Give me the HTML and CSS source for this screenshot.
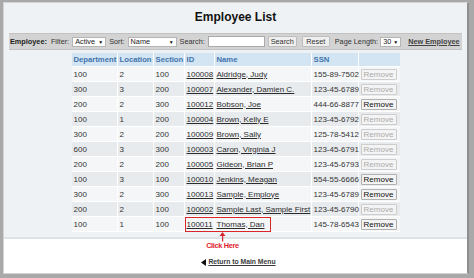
FILE: index.html
```html
<!DOCTYPE html>
<html>
<head>
<meta charset="utf-8">
<link rel="stylesheet" href="styles.css">
</head>
<body>
<div class="window">
  <div class="panel">
    <h1 class="title">Employee List</h1>
    <div class="toolbar">
      <b class="tb-label">Employee:</b>
      <span class="tb-text">Filter:</span>
      <div class="select w-active"><span>Active</span><span class="caret">▼</span></div>
      <span class="tb-text">Sort:</span>
      <div class="select w-name"><span>Name</span><span class="caret">▼</span></div>
      <span class="tb-text">Search:</span>
      <input class="search-input" type="text">
      <button class="tb-btn w-search">Search</button>
      <button class="tb-btn w-reset">Reset</button>
      <span class="tb-text pl">Page Length:</span>
      <div class="select w-len"><span>30</span><span class="caret">▼</span></div>
      <a class="new-link" href="#">New Employee</a>
    </div>
    <div class="table-wrap">
      <table class="grid">
        <colgroup>
          <col class="c-dept"><col class="c-loc"><col class="c-sec"><col class="c-id"><col class="c-name"><col class="c-ssn"><col class="c-rm">
        </colgroup>
        <thead>
          <tr><th>Department</th><th>Location</th><th>Section</th><th>ID</th><th>Name</th><th>SSN</th><th class="last"></th></tr>
        </thead>
        <tbody>
          <tr><td>100</td><td>2</td><td>100</td><td><a href="#">100008</a></td><td><a href="#">Aldridge, Judy</a></td><td>155-89-7502</td><td class="last"><button class="rm" disabled>Remove</button></td></tr>
          <tr><td>300</td><td>3</td><td>200</td><td><a href="#">100007</a></td><td><a href="#">Alexander, Damien C.</a></td><td>123-45-6789</td><td class="last"><button class="rm" disabled>Remove</button></td></tr>
          <tr><td>200</td><td>2</td><td>300</td><td><a href="#">100012</a></td><td><a href="#">Bobson, Joe</a></td><td>444-66-8877</td><td class="last"><button class="rm">Remove</button></td></tr>
          <tr><td>100</td><td>1</td><td>200</td><td><a href="#">100004</a></td><td><a href="#">Brown, Kelly E</a></td><td>123-45-6792</td><td class="last"><button class="rm" disabled>Remove</button></td></tr>
          <tr><td>300</td><td>2</td><td>200</td><td><a href="#">100009</a></td><td><a href="#">Brown, Sally</a></td><td>125-78-5412</td><td class="last"><button class="rm" disabled>Remove</button></td></tr>
          <tr><td>600</td><td>3</td><td>300</td><td><a href="#">100003</a></td><td><a href="#">Caron, Virginia J</a></td><td>123-45-6791</td><td class="last"><button class="rm" disabled>Remove</button></td></tr>
          <tr><td>200</td><td>2</td><td>200</td><td><a href="#">100005</a></td><td><a href="#">Gideon, Brian P</a></td><td>123-45-6793</td><td class="last"><button class="rm" disabled>Remove</button></td></tr>
          <tr><td>100</td><td>3</td><td>100</td><td><a href="#">100010</a></td><td><a href="#">Jenkins, Meagan</a></td><td>554-55-6666</td><td class="last"><button class="rm">Remove</button></td></tr>
          <tr><td>300</td><td>2</td><td>300</td><td><a href="#">100013</a></td><td><a href="#">Sample, Employe</a></td><td>123-45-6789</td><td class="last"><button class="rm">Remove</button></td></tr>
          <tr><td>200</td><td>2</td><td>100</td><td><a href="#">100002</a></td><td><a href="#">Sample Last, Sample First</a></td><td>123-45-6790</td><td class="last"><button class="rm" disabled>Remove</button></td></tr>
          <tr><td>100</td><td>1</td><td>100</td><td class="anchor"><a href="#">100011</a>
                <div class="callout-box"></div>
                <svg class="callout-arrow" width="7" height="10" viewBox="0 0 7 10"><polygon points="3.5,0 0.5,4 6.5,4" fill="#d9262c"/><rect x="3" y="3.5" width="1.2" height="6" fill="#d9262c"/></svg>
                <span class="callout-text">Click Here</span>
              </td><td><a href="#">Thomas, Dan</a></td><td>145-78-6543</td><td class="last"><button class="rm">Remove</button></td></tr>
        </tbody>
      </table>
    </div>
  </div>
  <div class="footer">
    <a class="back" href="#"><svg class="back-icon" width="5" height="7" viewBox="0 0 5 7"><polygon points="0,3.5 5,0 5,7" fill="#111"/></svg><span>Return to Main Menu</span></a>
  </div>
</div>
</body>
</html>
```

FILE: styles.css
```css
html, body {
  margin: 0;
  padding: 0;
}
body {
  background: #a9a9a9;
  width: 474px;
  height: 278px;
  overflow: hidden;
  font-family: "Liberation Sans", Arial, sans-serif;
  color: #333;
}
.window {
  margin: 2px 0 0 3px;
  width: 466px;
  height: 272px;
  box-sizing: border-box;
  background: #fff;
  border: 1px solid #d4d4d4;
  border-right: 2px solid #8e8e8e;
}
.panel {
  background: #eef2f5;
  padding: 0 5px 5px;
  border-bottom: 2px solid #dde3e8;
}
.title {
  margin: 0;
  height: 30px;
  line-height: 29px;
  font-size: 12px;
  font-weight: bold;
  text-align: center;
  color: #111;
}
.toolbar {
  height: 15px;
  background: #d3d3d3;
  border-top: 1px solid #c2c2c2;
  border-bottom: 1px solid #c2c2c2;
  display: flex;
  align-items: center;
  font-size: 7.3px;
  color: #333;
  padding-left: 1px;
  white-space: nowrap;
  overflow: hidden;
}
.toolbar > * {
  flex-shrink: 0;
  white-space: nowrap;
}
.tb-label {
  font-weight: bold;
  color: #222;
  margin-right: 4px;
}
.tb-text {
  margin-right: 3px;
}
.tb-text.pl {
  margin-left: 5px;
  margin-right: 2px;
}
.select {
  box-sizing: border-box;
  height: 10px;
  background: #fff;
  border: 1px solid #b5b5b5;
  display: flex;
  align-items: center;
  justify-content: space-between;
  padding: 0 2px 0 2px;
  font-size: 7.3px;
  color: #222;
  margin-right: 3px;
}
.caret {
  font-size: 5px;
  color: #111;
}
.w-active { width: 34px; }
.w-name { width: 49px; }
.w-len { width: 21px; margin-right: 7px; }
.search-input {
  width: 57px;
  height: 11px;
  box-sizing: border-box;
  border: 1px solid #aaa;
  background: #fff;
  margin: 0 3px 0 0;
  padding: 0;
}
.tb-btn {
  height: 11px;
  box-sizing: border-box;
  padding: 0;
  margin: 0;
  font-family: "Liberation Sans", Arial, sans-serif;
  font-size: 7.3px;
  color: #333;
  background: #efefef;
  border: 1px solid #bdbdbd;
  border-radius: 1px;
  line-height: 9px;
}
.w-search { width: 29px; margin-right: 5px; }
.w-reset { width: 28px; }
.new-link {
  font-weight: bold;
  color: #444;
  text-decoration: underline;
}
.table-wrap {
  margin-top: 3px;
  display: flex;
  justify-content: center;
}
.grid {
  table-layout: fixed;
  width: 328px;
  border-collapse: separate;
  border-spacing: 0;
  font-size: 8px;
}
.c-dept { width: 46px; }
.c-loc { width: 36px; }
.c-sec { width: 31px; }
.c-id { width: 30px; }
.c-name { width: 97px; }
.c-ssn { width: 47px; }
.c-rm { width: 41px; }
.grid th, .grid td {
  padding: 0 0 0 2px;
  text-align: left;
  white-space: nowrap;
  border-right: 1px solid #fff;
  border-bottom: 1px solid #fff;
  overflow: visible;
}
.grid th.last, .grid td.last {
  border-right: none;
}
.grid thead tr {
  height: 14px;
}
.grid th {
  background: #d3e4f3;
  color: #3f74ac;
  font-weight: bold;
  font-size: 7.7px;
}
.grid tbody tr {
  height: 15px;
}
.grid tbody tr:nth-child(odd) td {
  background: #f4f6f8;
}
.grid tbody tr:nth-child(even) td {
  background: #e8ebee;
}
.grid td {
  color: #333;
}
.grid td a {
  color: #2c2c2c;
  text-decoration: underline;
}
.rm {
  display: block;
  width: 36px;
  height: 11px;
  box-sizing: border-box;
  padding: 0;
  margin: 0;
  font-family: "Liberation Sans", Arial, sans-serif;
  font-size: 8px;
  line-height: 9px;
  color: #111;
  background: #f3f3f3;
  border: 1px solid #b0b0b0;
  border-radius: 1px;
}
.rm:disabled {
  color: #ababab;
  border-color: #cdcdcd;
  background: #f4f4f4;
}
.anchor {
  position: relative;
}
.callout-box {
  position: absolute;
  left: 0;
  top: 0;
  width: 86px;
  height: 15px;
  box-sizing: border-box;
  border: 1.3px solid #d9262c;
}
.callout-arrow {
  position: absolute;
  left: 34px;
  top: 15px;
}
.callout-text {
  position: absolute;
  left: 20px;
  top: 25px;
  width: 36px;
  text-align: center;
  font-size: 7.3px;
  line-height: 8px;
  font-weight: bold;
  color: #e0202a;
  letter-spacing: -0.3px;
}
.footer {
  padding-top: 18px;
  display: flex;
  justify-content: center;
  padding-left: 6px;
}
.back {
  display: flex;
  align-items: center;
  gap: 2px;
  font-size: 6.8px;
  line-height: 10px;
  font-weight: bold;
  color: #3a3a3a;
  text-decoration: underline;
}
.back-icon {
  display: block;
}
```
